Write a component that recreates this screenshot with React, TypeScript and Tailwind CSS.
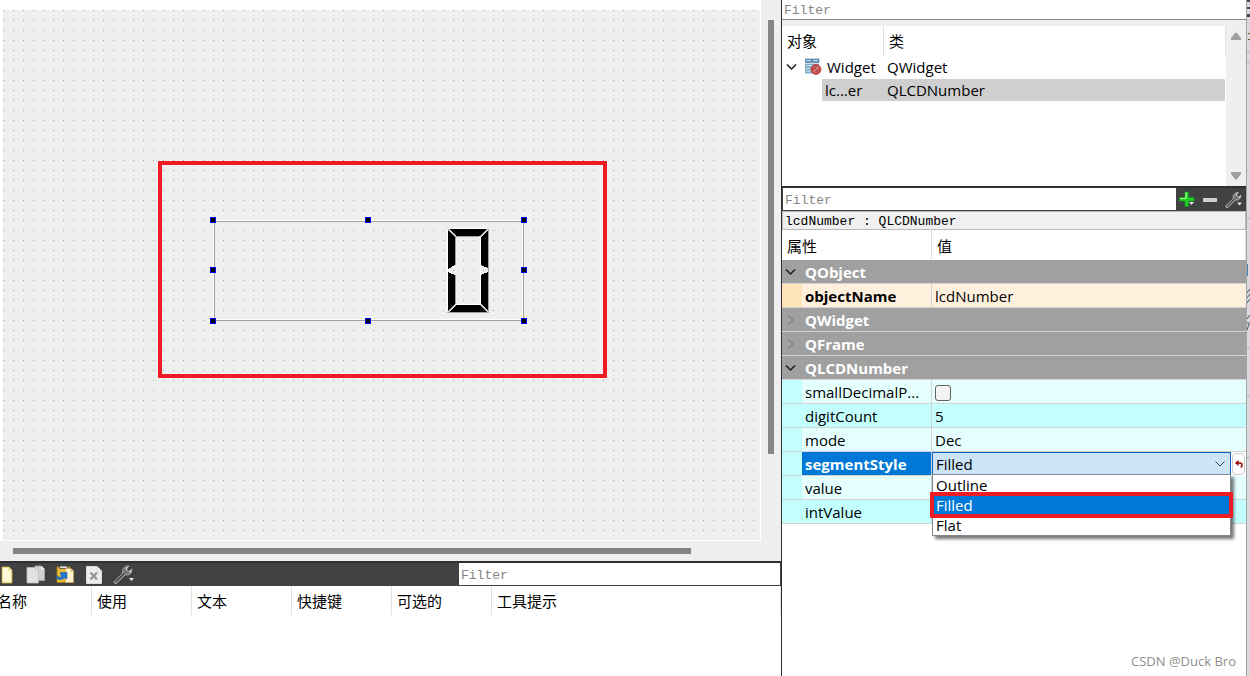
import { useState } from "react"
import type { ReactNode } from "react"

type Property = {
  name: string
  value?: string
  kind: "group" | "text" | "check" | "select"
  tone?: "peach" | "light" | "dark"
  open?: boolean
}

const properties: Property[] = [
  { name: "QObject", kind: "group", open: true },
  { name: "objectName", kind: "text", value: "lcdNumber", tone: "peach" },
  { name: "QWidget", kind: "group" },
  { name: "QFrame", kind: "group" },
  { name: "QLCDNumber", kind: "group", open: true },
  { name: "smallDecimalP...", kind: "check", tone: "light" },
  { name: "digitCount", kind: "text", value: "5", tone: "dark" },
  { name: "mode", kind: "text", value: "Dec", tone: "light" },
  { name: "segmentStyle", kind: "select", tone: "dark" },
  { name: "value", kind: "text", value: "", tone: "light" },
  { name: "intValue", kind: "text", value: "", tone: "dark" },
]

const tones = {
  peach: "bg-[#fff0de]",
  light: "bg-[#e5ffff]",
  dark: "bg-[#c4ffff]",
}

const segmentStyles = ["Outline", "Filled", "Flat"]

const actionColumns = ["名称", "使用", "文本", "快捷键", "可选的", "工具提示"]

const handles = [
  "left-0 top-0",
  "left-[155px] top-0",
  "right-0 top-0",
  "left-0 top-[50px]",
  "right-0 top-[50px]",
  "left-0 bottom-0",
  "left-[155px] bottom-0",
  "right-0 bottom-0",
]

const mono = "font-['Liberation_Mono',monospace] text-[13px]"

function Chevron({ open, className }: { open?: boolean; className: string }) {
  return (
    <svg viewBox="0 0 12 12" className={`size-3 ${className}`} fill="none" stroke="currentColor" strokeWidth="1.5">
      {open ? <path d="M1 3.5 5.500 8 10 3.500" /> : <path d="M3.500 1.5 8 6 3.500 10.500" />}
    </svg>
  )
}

function WrenchIcon() {
  return (
    <svg viewBox="0 0 22 20" className="h-5 w-[22px]">
      <path
        d="M2.500 18.500Q1 18.500 1 16.800L9.500 8.300Q9 4.300 11.500 2.200 13.500.500 16 1L13.600 3.600 14.300 5.800 16.600 6.200 18.800 3.800Q19.200 7.300 17 9 15 10.500 12.200 9.800L3.500 18.500Z"
        fill="#727475"
        stroke="#b0b1b2"
        strokeWidth=".9"
      />
      <path d="M3 16.500 11 8.500" stroke="#454647" strokeWidth="1.100" />
      <path d="M14 2.300 13 4.500M16.500 7.300 18 5.800" stroke="#f2f2f2" strokeWidth="1.200" />
      <path d="M16 13h5l-2.500 3z" fill="#e8e8e8" />
    </svg>
  )
}

function PageIcon() {
  return (
    <svg viewBox="0 0 20 20" className="size-5">
      <path d="M5 2h7l3 3v13H5z" fill="#fdf3b5" stroke="#c9a84a" strokeWidth=".8" />
      <path d="M6 3h5v3h3v10H6z" fill="#fff9d8" />
      <path d="M11.500 2v3.500H15z" fill="#e9d9a2" />
    </svg>
  )
}

function CopyIcon() {
  return (
    <svg viewBox="0 0 20 20" className="size-5">
      <path d="M9 1h6.500l3 3v11.500H9z" fill="#d2d2d2" stroke="#aaa" strokeWidth=".8" />
      <path d="M15 1v3.500h3.500z" fill="#f5f5f5" />
      <path d="M1 2.500h8.500l3 3V18H1z" fill="#e3e3e3" stroke="#bcbcbc" strokeWidth=".8" />
      <path d="M9.500 2.500v3h3z" fill="#fff" stroke="#b5b5b5" strokeWidth=".6" />
    </svg>
  )
}

function PasteIcon() {
  return (
    <svg viewBox="0 0 20 20" className="size-5">
      <path d="M2 2h13v15.500H2z" fill="#e9bd3a" stroke="#a87913" strokeWidth=".8" />
      <path d="M4.500 1h8v2.500h-8z" fill="#dedede" stroke="#444" strokeWidth=".8" />
      <path d="M10.500 3.500h5.500l2.500 2.500v11.500h-8z" fill="#fff3ce" stroke="#c9a45c" strokeWidth=".8" />
      <path d="M15.500 3.500v3.500h3z" fill="#e2c887" />
      <path d="M1.500 10.500q2 2.500 5 1.500L5.500 9V7.500H12V14l-2.500-1q-3.500 3-8 .500z" fill="#2477d4" stroke="#1256a5" strokeWidth=".5" />
    </svg>
  )
}

function DeleteIcon() {
  return (
    <svg viewBox="0 0 20 20" className="size-5">
      <path d="M2.500 1.500h10.500l4.500 4.500v12.500h-15z" fill="#ededed" stroke="#dcdcdc" />
      <path d="M13 1.500v4.500h4.500z" fill="#fff" stroke="#bdbdbd" strokeWidth=".6" />
      <path d="m6.500 7.500 6.500 7M13 7.500l-6.500 7" stroke="#949494" strokeWidth="2.200" />
    </svg>
  )
}

function PlusIcon() {
  return (
    <svg viewBox="0 0 18 18" className="size-[18px]">
      <path d="M7 1h3.500v5.500h5.500v3.500h-5.500V15.500H7v-5.500H1.500V6.500H7z" fill="#1fd024" stroke="#12a51a" strokeWidth=".6" />
      <path d="M8 1.500v6H2" fill="none" stroke="#9bff8e" strokeWidth="1.200" />
      <path d="M11 11h5l-2.500 3z" fill="#e8e8e8" />
    </svg>
  )
}

function WidgetIcon() {
  return (
    <svg viewBox="0 0 18 18" className="size-[18px]">
      <rect x="1.500" y="1" width="6" height="3.500" fill="#6a9dc1" stroke="#44708f" strokeWidth=".6" />
      <rect x="8" y="1" width="7" height="3.500" fill="#5d94bb" stroke="#44708f" strokeWidth=".6" />
      <rect x="1.500" y="6" width="13" height="4" fill="#8fbcd8" stroke="#6087a3" strokeWidth=".6" />
      <rect x="1.500" y="11.500" width="9" height="3.500" fill="#8fbcd8" stroke="#6087a3" strokeWidth=".6" />
      <path d="M2.500 2.500h4M9 2.500h5M2.500 7.500h5M2.500 13h4" stroke="#c5e2f1" />
      <circle cx="12" cy="11.500" r="5" fill="#c8413c" stroke="#9f2c2b" strokeWidth=".6" />
      <circle cx="12" cy="11.500" r="3" fill="#a54847" stroke="#dc8581" strokeWidth=".6" />
      <path d="m9.500 14 5-5" stroke="#e08a86" strokeWidth="1.300" />
    </svg>
  )
}

function ToolButton({ label, className, children }: { label: string; className?: string; children: ReactNode }) {
  return (
    <button type="button" aria-label={label} className={`flex shrink-0 items-center justify-center ${className ?? ""}`}>
      {children}
    </button>
  )
}

function LcdDigit() {
  return (
    <svg viewBox="0 0 44 86" className="absolute right-[33px] top-[5px] h-[86px] w-11" shapeRendering="crispEdges">
      {/* bevel */}
      <path d="M1.500 84V2L42 1.500M8.500 77.500H34V9" fill="none" stroke="#fff" />
      <path d="M1 85.500H42.500V2M9.500 9.500H33M9.500 9v29M9.500 48v29" fill="none" stroke="#a0a0a0" />
      {/* segments */}
      <path d="M3 2H41L34 9H10Z" />
      <path d="M2 3 9 10V38L2 42Z" />
      <path d="M42 3 35 10V38L42 41Z" />
      <path d="M2 45 9 48V77L2 84Z" />
      <path d="M42 45 35 48V77L42 84Z" />
      <path d="M10 78H34L41 85H3Z" />
      <g shapeRendering="auto" stroke="#d0d0d0" strokeWidth="1.200">
        <path d="M1.500 1.500 9.500 9.500M42.500 1.500 34.500 9.500M1.500 85.500 9.500 77.500M42.500 85.500 34.500 77.500" />
      </g>
    </svg>
  )
}

function FormCanvas() {
  return (
    <div className="flex min-h-[541px] flex-1 flex-col bg-[#efefef]">
      <div className="flex flex-1">
        <div className="flex flex-1 bg-white pb-px pl-[3px] pr-px pt-[10px]">
          <div className="relative flex-1 bg-[conic-gradient(from_0deg_at_1px_1px,#efefef_75%,#a0a0a0_0)] bg-[length:10px_10px]">
            <div className="absolute left-[155px] top-[151px] h-[217px] w-[449px] rounded-[1px] border-4 border-[#ed1c24]" />

            {/* selected lcd widget */}
            <div className="absolute left-[207px] top-[207px] h-[107px] w-[317px] py-[3px] pl-1 pr-[3px]">
              <div className="relative mt-px h-[100px] border border-[#a0a0a0] shadow-[-1px_-1px_0_#fff,inset_-1px_-1px_0_#fff]">
                <LcdDigit />
              </div>
              {handles.map((place) => (
                <span key={place} className={`absolute size-[6px] border border-[#0000ff] bg-black ${place}`} />
              ))}
            </div>
          </div>
        </div>
        <div className="flex w-5 flex-col pl-[7px] pt-5">
          <div className="w-[6px] flex-[5] bg-[#858585]" />
          <div className="flex-1" />
        </div>
      </div>
      <div className="flex h-5 items-center pl-[13px]">
        <div className="h-[6px] flex-[15] bg-[#858585]" />
        <div className="flex-[2]" />
      </div>
    </div>
  )
}

function ActionEditor() {
  return (
    <div className="flex h-[115px] flex-col bg-white">
      <div className="flex h-[25px] border-t-2 border-[#2e2f30] bg-[#404142]">
        <div className="-ml-[3px] flex flex-1 items-center gap-[9px]">
          <ToolButton label="New"><PageIcon /></ToolButton>
          <ToolButton label="Copy"><CopyIcon /></ToolButton>
          <ToolButton label="Paste"><PasteIcon /></ToolButton>
          <ToolButton label="Delete"><DeleteIcon /></ToolButton>
          <ToolButton label="Configure"><WrenchIcon /></ToolButton>
        </div>
        <input
          aria-label="Filter actions"
          placeholder="Filter"
          className={`mb-px mr-px w-[321px] bg-white px-[2px] pt-[3px] outline-none placeholder:text-[#858585] ${mono}`}
        />
      </div>
      <div className="overflow-hidden">
        <table className="-ml-2 w-[calc(100%+8px)] table-fixed border-separate border-spacing-0">
          <thead>
            <tr>
              {actionColumns.map((col) => (
                <th
                  key={col}
                  className="h-[29px] w-[100px] border-r border-[#e2e2e2] p-0 pl-[5px] text-left font-normal last:w-auto"
                >
                  {col}
                </th>
              ))}
            </tr>
          </thead>
        </table>
      </div>
    </div>
  )
}

function ObjectInspector() {
  return (
    <div>
      <input
        aria-label="Filter objects"
        placeholder="Filter"
        className={`block h-5 w-full border-b border-[#858585] bg-white px-[2px] pt-[2px] outline-none placeholder:text-[#858585] ${mono}`}
      />
      <div className="mt-[6px] flex h-40 bg-white">
        <div className="flex-1">
          <table className="w-full table-fixed border-separate border-spacing-0">
            <thead>
              <tr className="h-[30px] text-left">
                <th className="w-[102px] border-r border-[#e2e2e2] p-0 pl-[5px] font-normal">对象</th>
                <th className="border-r border-[#e2e2e2] p-0 pl-[5px] font-normal">类</th>
              </tr>
            </thead>
            <tbody>
              <tr className="h-[23px]">
                <td className="p-0 pb-px">
                  <div className="flex items-center whitespace-nowrap pl-[4px]">
                    <Chevron open className="mr-[6px] shrink-0 text-[#1a1a1a]" />
                    <WidgetIcon />
                    <span className="ml-[5px]">Widget</span>
                  </div>
                </td>
                <td className="p-0 pb-px pl-[3px]">QWidget</td>
              </tr>
              <tr className="h-[22px]">
                <td className="p-0">
                  <div className="ml-10 h-[22px] rounded-l-[1px] bg-[#cfcfcf] pl-[3px] leading-[22px]">lc...er</div>
                </td>
                <td className="p-0">
                  <div className="mr-px h-[22px] rounded-r-[1px] bg-[#cfcfcf] pl-[3px] leading-[22px]">QLCDNumber</div>
                </td>
              </tr>
            </tbody>
          </table>
        </div>
        <div className="flex w-5 flex-col items-center justify-between bg-[#efefef] py-[6px] pr-px">
          <svg viewBox="0 0 10 8" className="h-2 w-[10px]"><path d="M4 1Q5 0 6 1L10 6V8H0V6Z" fill="#a0a0a0" /></svg>
          <svg viewBox="0 0 10 8" className="h-2 w-[10px]"><path d="M4 7Q5 8 6 7L10 2V0H0V2Z" fill="#a0a0a0" /></svg>
        </div>
      </div>
    </div>
  )
}

function SegmentStyleEditor() {
  const [style, setStyle] = useState("Filled")

  return (
    <div className="relative flex h-6 bg-white">
      <div className="relative flex-1">
        <select
          aria-label="segmentStyle"
          value={style}
          onChange={(e) => setStyle(e.target.value)}
          className="block h-6 w-full appearance-none border border-[#0a64bd] bg-[#cce4f7] pl-[3px] leading-[22px] outline-none"
        >
          {segmentStyles.map((item) => (
            <option key={item}>{item}</option>
          ))}
        </select>
        <svg
          viewBox="0 0 12 12"
          className="pointer-events-none absolute right-[5px] top-[6px] size-3"
          fill="none"
          stroke="#505050"
        >
          <path d="M1.500 3.500 6 8 10.500 3.500" />
        </svg>

        {/* open list */}
        <ul className="absolute inset-x-0 top-[22px] z-10 border border-[#828790] bg-white shadow-[3px_3px_3px_#0008]">
          {segmentStyles.map((item) => (
            <li key={item} className="relative h-5 leading-5">
              <button
                type="button"
                onClick={() => setStyle(item)}
                className={`block h-5 w-full pl-[3px] text-left ${item === style ? "bg-[#0078d7] text-white" : ""}`}
              >
                {item}
              </button>
              {item === "Filled" && (
                <span className="pointer-events-none absolute -inset-x-[3px] -inset-y-[3px] rounded-[1px] border-4 border-[#ed1c24]" />
              )}
            </li>
          ))}
        </ul>
      </div>
      <button
        type="button"
        aria-label="Reset"
        className="my-px ml-px mr-px flex w-[13px] items-center justify-center rounded border border-[#cdcdcd] bg-[#fdfdfd]"
      >
        <svg viewBox="0 0 8 8" className="size-2" fill="none" stroke="#980000" strokeWidth="1.500">
          <path d="M1 3h4q2 0 2 2T5.500 7" />
          <path d="M3.500 0v6L0 3Z" fill="#980000" stroke="none" />
        </svg>
      </button>
    </div>
  )
}

function PropertyRow({ property }: { property: Property }) {
  const { name, value, kind, tone, open } = property
  const line = "h-6 border-b border-[#d3d3d3] p-0"
  const text = "pl-[3px] pt-[2px] leading-[21px]"

  if (kind === "group") {
    return (
      <tr className="bg-[#a0a0a0] font-bold text-white">
        <td className={`${line} pl-[3px]`}>
          <Chevron open={open} className={open ? "text-[#1a1a1a]" : "text-[#858585]"} />
        </td>
        <td colSpan={2} className={`${line} ${text}`}>{name}</td>
      </tr>
    )
  }

  const bg = tones[tone ?? "light"]
  const nameStyle =
    kind === "select" ? "bg-[#0078d7] font-bold text-white" : tone === "peach" ? `${bg} font-bold` : bg

  return (
    <tr>
      <td className={`${line} ${tone === "peach" ? "bg-[#ffe3ba]" : "bg-[#c4ffff]"}`} />
      <td className={`${line} border-r ${text} ${nameStyle}`}>{name}</td>
      {kind === "select" ? (
        <td className="h-6 p-0"><SegmentStyleEditor /></td>
      ) : (
        <td className={`${line} ${text} ${bg}`}>
          {kind === "check" ? (
            <input
              type="checkbox"
              aria-label={name}
              className="block size-4 appearance-none rounded-[3px] border border-[#626262] bg-[#f3f3f3]"
            />
          ) : (
            value
          )}
        </td>
      )}
    </tr>
  )
}

function PropertyEditor() {
  return (
    <div className="flex-1 bg-white">
      <div className="flex h-[25px] border-t-2 border-[#2e2f30] bg-[#404142]">
        <input
          aria-label="Filter properties"
          placeholder="Filter"
          className={`mb-px ml-px min-w-0 flex-1 bg-white px-[2px] pt-[3px] outline-none placeholder:text-[#858585] ${mono}`}
        />
        <ToolButton label="Add" className="w-[22px]"><PlusIcon /></ToolButton>
        <ToolButton label="Remove" className="w-6">
          <svg viewBox="0 0 14 4" className="h-1 w-[14px]"><path d="M0 0h14v4H0z" fill="#d0d0d0" /></svg>
        </ToolButton>
        <ToolButton label="Configure" className="w-6">
          <svg viewBox="0 0 20 18" className="h-[18px] w-5">
            <path
              d="M3 16.500Q1.500 16.500 1.800 15L9 7.800Q8.800 4.300 10.800 2.500 12.500 1 14.500 1.500L12.600 3.700 13.200 5.400 15 5.800 16.800 3.800Q17.200 6.800 15.300 8.200 13.500 9.500 11.300 9L4 16.500Z"
              fill="#727475"
              stroke="#b0b1b2"
              strokeWidth=".9"
            />
            <path d="M3.500 14.800 10 8.200" stroke="#454647" />
            <path d="M13 2.500 12 4.500M15 7 16.300 5.600" stroke="#f2f2f2" />
            <path d="M13 11.500h5L15.500 14.500z" fill="#e8e8e8" />
          </svg>
        </ToolButton>
      </div>
      <div className={`h-[19px] border border-[#b9b9b9] bg-[#f0f0f0] px-[2px] pt-px leading-[18px] ${mono}`}>
        lcdNumber : QLCDNumber
      </div>
      <table className="w-full table-fixed border-separate border-spacing-0">
        <colgroup>
          <col className="w-5" />
          <col className="w-[130px]" />
          <col />
        </colgroup>
        <thead>
          <tr className="h-[30px] text-left">
            <th colSpan={2} className="border-r border-[#e2e2e2] p-0 pl-[5px] pt-[2px] font-normal">属性</th>
            <th className="border-r border-[#e2e2e2] p-0 pl-[5px] pt-[2px] font-normal">值</th>
          </tr>
        </thead>
        <tbody>
          {properties.map((property) => (
            <PropertyRow key={property.name} property={property} />
          ))}
        </tbody>
      </table>
    </div>
  )
}

// sliver of the window behind the designer
function BackgroundEdge() {
  return (
    <div className="w-1 border-l border-[#a3a3a3] bg-[#dadada]">
      <svg viewBox="0 0 3 540" className="h-[540px] w-[3px]" shapeRendering="crispEdges">
        <path d="M0 0h3v2H0zM0 7h3v2H0zM0 14h3v3H0z" fill="#45455f" />
        <path d="M1 33h2v1H1zM1 39h2v1H1z" fill="#6b5525" />
        <path d="M0 51h3v1H0zM0 62h3v1H0zM0 218h3v1H0zM0 347h3v1H0zM0 396h3v1H0zM0 457h3v1H0z" fill="#b4b4b4" />
        <path d="M0 264h1v12H0z" fill="#4b80ab" />
        <g shapeRendering="auto" stroke="#44546a" fill="none">
          <path d="M0 293 3 289M0 298 3 294M0 303 3 299M0 319 3 315M0 323h3M0 330 2 324" />
        </g>
      </svg>
    </div>
  )
}

export default function App() {
  return (
    <div className="relative flex min-h-screen overflow-hidden bg-[#efefef] font-['Open_Sans','Noto_Sans_CJK_SC',sans-serif] text-[15px] leading-5 text-black">
      <div className="flex min-w-0 flex-1 flex-col">
        <FormCanvas />
        <ActionEditor />
      </div>

      <div className="flex w-[465px] shrink-0 flex-col border-l border-[#2e2f30]">
        <ObjectInspector />
        <PropertyEditor />
      </div>

      <BackgroundEdge />

      <div className="absolute bottom-[5px] right-[14px] text-[13px] text-[#8e8e8e]">CSDN @Duck Bro</div>
    </div>
  )
}
